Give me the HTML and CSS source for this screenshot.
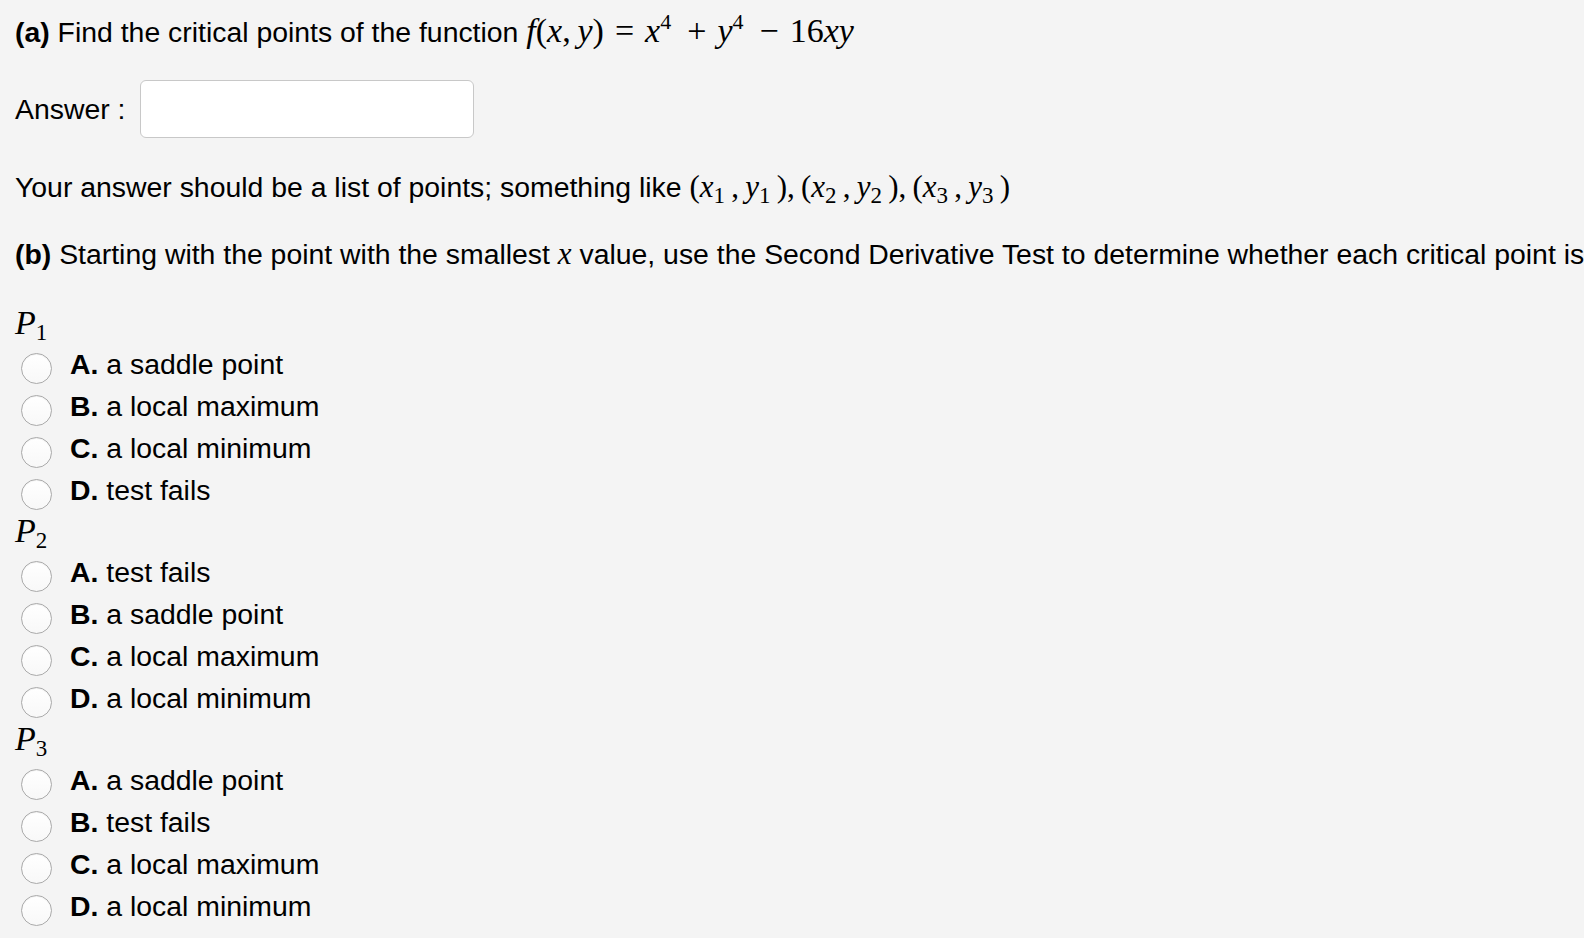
FILE: index.html
```html
<!DOCTYPE html>
<html>
<head>
    <title>Critical Points</title>
    <meta charset="utf-8">
    <link rel="stylesheet" href="styles.css">
</head>
<body>
    <div class="problem">
        <p class="line line-a"><b>(a)</b> Find the critical points of the function <span class="math"><i>f</i>(<i>x</i>,&thinsp;<i>y</i>)<span class="op">=</span><i>x</i><sup>4</sup><span class="op">+</span><i>y</i><sup>4</sup><span class="op">−</span>16<i>xy</i></span></p>

        <div class="answer-row">
            <label for="answer">Answer :</label>
            <input type="text" id="answer" class="answer-box">
        </div>

        <p class="line line-hint">Your answer should be a list of points; something like <span class="math math-sm">(<i>x</i><sub>1</sub>&thinsp;,&thinsp;<i>y</i><sub>1</sub>&thinsp;),&thinsp;(<i>x</i><sub>2</sub>&thinsp;,&thinsp;<i>y</i><sub>2</sub>&thinsp;),&thinsp;(<i>x</i><sub>3</sub>&thinsp;,&thinsp;<i>y</i><sub>3</sub>&thinsp;)</span></p>

        <p class="line line-b"><b>(b)</b> Starting with the point with the smallest <span class="math math-sm"><i>x</i></span> value, use the Second Derivative Test to determine whether each critical point is</p>

        <div class="point">
            <div class="point-label"><i>P</i><sub>1</sub></div>
            <label class="option"><input type="radio" name="p1"><span><b>A.</b> a saddle point</span></label>
            <label class="option"><input type="radio" name="p1"><span><b>B.</b> a local maximum</span></label>
            <label class="option"><input type="radio" name="p1"><span><b>C.</b> a local minimum</span></label>
            <label class="option"><input type="radio" name="p1"><span><b>D.</b> test fails</span></label>
        </div>

        <div class="point">
            <div class="point-label"><i>P</i><sub>2</sub></div>
            <label class="option"><input type="radio" name="p2"><span><b>A.</b> test fails</span></label>
            <label class="option"><input type="radio" name="p2"><span><b>B.</b> a saddle point</span></label>
            <label class="option"><input type="radio" name="p2"><span><b>C.</b> a local maximum</span></label>
            <label class="option"><input type="radio" name="p2"><span><b>D.</b> a local minimum</span></label>
        </div>

        <div class="point">
            <div class="point-label"><i>P</i><sub>3</sub></div>
            <label class="option"><input type="radio" name="p3"><span><b>A.</b> a saddle point</span></label>
            <label class="option"><input type="radio" name="p3"><span><b>B.</b> test fails</span></label>
            <label class="option"><input type="radio" name="p3"><span><b>C.</b> a local maximum</span></label>
            <label class="option"><input type="radio" name="p3"><span><b>D.</b> a local minimum</span></label>
        </div>
    </div>
</body>
</html>
```

FILE: styles.css
```css
html, body {
    margin: 0;
    height: 100%;
    overflow: hidden;
}

body {
    background: #f4f4f4;
    color: #000;
    font-family: "Liberation Sans", Arial, sans-serif;
    font-size: 28.4px;
}

.problem {
    padding: 11px 15px 0;
}

.line {
    margin: 0;
    line-height: 40px;
    white-space: nowrap;
}

.math {
    font-family: "Liberation Serif", "Times New Roman", serif;
    font-size: 34px;
}

.math-sm {
    font-size: 31px;
}

.math .op {
    margin: 0 11px;
}

.math sup {
    font-size: 22px;
    vertical-align: 13px;
    line-height: 0;
    padding-right: 5px;
}

.math sub,
.point-label sub {
    font-size: 23px;
    vertical-align: -6px;
    line-height: 0;
}

.answer-row {
    display: flex;
    align-items: center;
    gap: 15px;
    margin-top: 28px;
}

.answer-box {
    width: 334px;
    height: 58px;
    box-sizing: border-box;
    background: #fff;
    border: 1px solid #c8c8c8;
    border-radius: 6px;
    font-size: 26px;
    padding: 0 10px;
}

.line-hint {
    margin-top: 29px;
}

.line-b {
    margin-top: 27px;
    margin-bottom: 29px;
}

.point-label {
    font-family: "Liberation Serif", "Times New Roman", serif;
    font-size: 34px;
    line-height: 40px;
}

.option {
    display: flex;
    align-items: center;
    height: 42px;
    gap: 18px;
    padding-left: 6px;
}

.option input {
    appearance: none;
    -webkit-appearance: none;
    margin: 9px 0 0;
    width: 31px;
    height: 31px;
    border-radius: 50%;
    border: 1px solid #aaa;
    background: linear-gradient(to bottom, #ffffff, #f8f8f8);
    box-shadow: inset 0 1px 1px rgba(0,0,0,0.06);
    flex-shrink: 0;
}
```
